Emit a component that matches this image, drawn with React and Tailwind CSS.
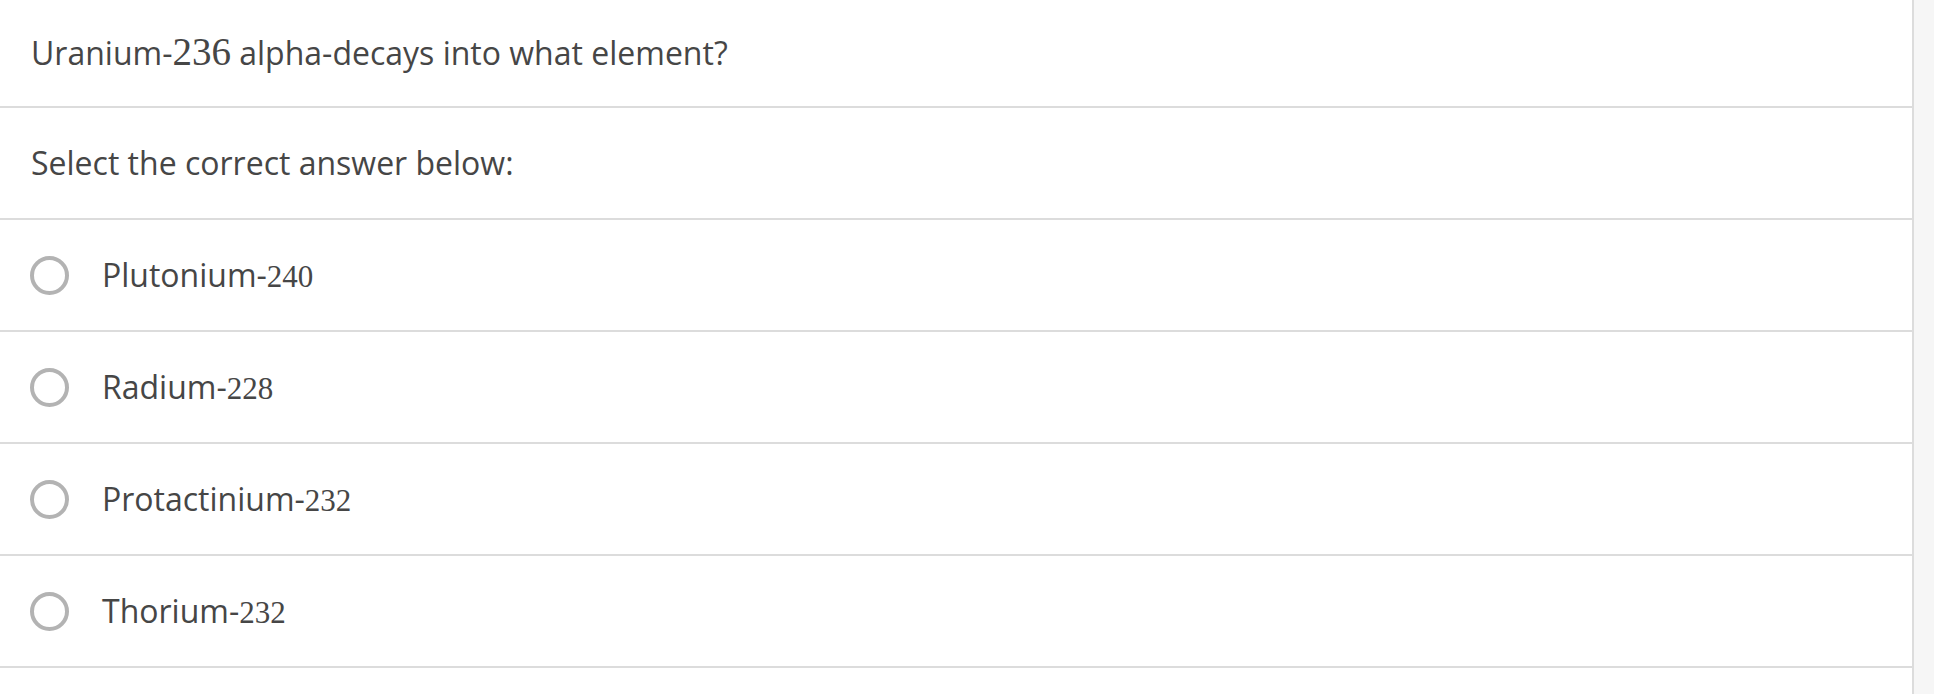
import React from 'react';

const options = [
    { name: 'Plutonium', num: '240' },
    { name: 'Radium', num: '228' },
    { name: 'Protactinium', num: '232' },
    { name: 'Thorium', num: '232' },
];

// MathJax-style numerals
function Num({ children, className }) {
    return (
        <span className={"font-['Liberation_Serif','Times_New_Roman',serif] leading-none " + className}>
            {children}
        </span>
    );
}

export default function App() {
    return (
        <div className="flex min-h-[694px] w-full bg-[#f6f6f6] font-['Open_Sans',sans-serif] text-[32px] text-[#464646]">
            <div className="w-[1914px] border-r-2 border-[#dcdcdc] bg-white">
                <div className="flex h-[108px] items-center border-b-2 border-[#dcdcdc] pl-[31px]">
                    <p>
                        Uranium-<Num className="text-[39px]">236</Num> alpha-decays into what element?
                    </p>
                </div>
                <div className="flex h-[112px] items-center border-b-2 border-[#dcdcdc] pl-[31px]">
                    Select the correct answer below:
                </div>
                {options.map((o) => (
                    <label key={o.name} className="flex h-[112px] cursor-pointer items-center border-b-2 border-[#dcdcdc] pl-[30px]">
                        <span className="h-[39px] w-[39px] shrink-0 rounded-full border-[4px] border-[#b3b3b3]" />
                        <span className="ml-[33px]">
                            {o.name}-<Num className="text-[31px]">{o.num}</Num>
                        </span>
                    </label>
                ))}
            </div>
        </div>
    );
}
